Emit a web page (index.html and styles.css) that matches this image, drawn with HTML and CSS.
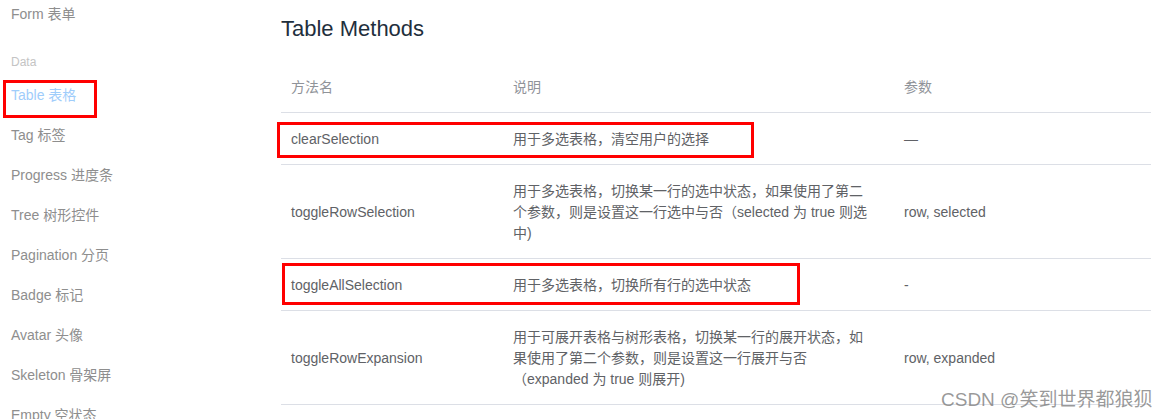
FILE: index.html
```html
<!DOCTYPE html>
<html lang="zh-CN">
<head>
<meta charset="utf-8">
<title>Table Methods</title>
<link rel="stylesheet" href="styles.css">
</head>
<body>
<div class="page">
  <nav class="sidebar">
    <div class="nav-list">
      <a class="nav-item">Form 表单</a>
      <div class="nav-group">Data</div>
      <a class="nav-item active">Table 表格</a>
      <a class="nav-item">Tag 标签</a>
      <a class="nav-item">Progress 进度条</a>
      <a class="nav-item">Tree 树形控件</a>
      <a class="nav-item">Pagination 分页</a>
      <a class="nav-item">Badge 标记</a>
      <a class="nav-item">Avatar 头像</a>
      <a class="nav-item">Skeleton 骨架屏</a>
      <a class="nav-item">Empty 空状态</a>
    </div>
  </nav>
  <main class="content">
    <h3 class="title">Table Methods</h3>
    <table class="methods">
      <colgroup>
        <col class="c1"><col class="c2"><col class="c3">
      </colgroup>
      <thead>
        <tr><th>方法名</th><th>说明</th><th>参数</th></tr>
      </thead>
      <tbody>
        <tr><td>clearSelection</td><td>用于多选表格，清空用户的选择</td><td>—</td></tr>
        <tr><td>toggleRowSelection</td><td>用于多选表格，切换某一行的选中状态，如果使用了第二个参数，则是设置这一行选中与否（selected 为 true 则选中)</td><td>row, selected</td></tr>
        <tr><td>toggleAllSelection</td><td>用于多选表格，切换所有行的选中状态</td><td>-</td></tr>
        <tr><td>toggleRowExpansion</td><td>用于可展开表格与树形表格，切换某一行的展开状态，如果使用了第二个参数，则是设置这一行展开与否（expanded 为 true 则展开)</td><td>row, expanded</td></tr>
      </tbody>
    </table>
  </main>
</div>
<div class="mark mark-nav"></div>
<div class="mark mark-row1"></div>
<div class="mark mark-row3"></div>
<div class="watermark">CSDN @笑到世界都狼狈</div>
</body>
</html>
```
FILE: styles.css
```css
html, body {
  margin: 0;
  padding: 0;
  background: #fff;
  overflow: hidden;
}
body {
  width: 1169px;
  height: 419px;
  position: relative;
  font-family: "Liberation Sans", "Noto Sans CJK SC", sans-serif;
}
.page {
  display: flex;
  align-items: flex-start;
}
.sidebar {
  width: 270px;
  padding-left: 11px;
  flex: none;
}
.nav-list {
  display: flex;
  flex-direction: column;
  margin-top: -6px;
}
.nav-item {
  display: block;
  height: 40px;
  line-height: 41px;
  font-size: 14px;
  color: #8e8e8e;
  white-space: nowrap;
}
.nav-item.active {
  color: #9fcdfb;
}
.nav-group {
  padding-top: 15px;
  height: 26px;
  line-height: 27px;
  font-size: 12px;
  color: #c4c4c4;
}
.content {
  flex: 1;
  padding-right: 18px;
}
.title {
  margin: 14px 0 17px;
  font-size: 22px;
  line-height: 30px;
  font-weight: 400;
  color: #1f2f3d;
}
.methods {
  border-collapse: collapse;
  table-layout: fixed;
  width: 870px;
  font-size: 14px;
  line-height: 21px;
}
.c1 { width: 217px; }
.c2 { width: 391px; }
.c3 { width: 262px; }
.methods th,
.methods td {
  text-align: left;
  border-bottom: 1px solid #dcdfe6;
  padding: 16px 15px 14px;
  vertical-align: middle;
}
.methods th:first-child,
.methods td:first-child {
  padding-left: 10px;
}
.methods th {
  color: #909399;
  font-weight: 400;
  white-space: nowrap;
}
.methods td {
  color: #606266;
}
.mark {
  position: absolute;
  border: 3px solid #ff0000;
  box-sizing: border-box;
}
.mark-nav {
  left: 3px;
  top: 80px;
  width: 94px;
  height: 38px;
}
.mark-row1 {
  left: 277px;
  top: 122px;
  width: 477px;
  height: 36px;
}
.mark-row3 {
  left: 282px;
  top: 263px;
  width: 518px;
  height: 42px;
}
.watermark {
  position: absolute;
  left: 941px;
  top: 388px;
  font-size: 19px;
  line-height: 24px;
  color: rgba(120, 120, 120, 0.75);
  white-space: nowrap;
}
```
